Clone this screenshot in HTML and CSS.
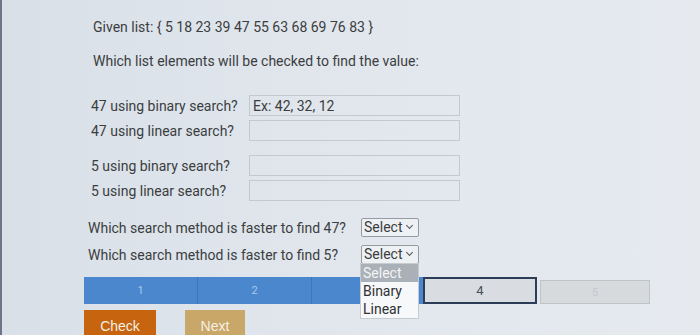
FILE: index.html
```html
<!DOCTYPE html>
<html lang="en">
<head>
    <meta charset="UTF-8">
    <title>Binary and Linear Search</title>
    <link rel="stylesheet" href="styles.css">
</head>
<body>

    <div class="activity">
        <p class="given">Given list: { 5 18 23 39 47 55 63 68 69 76 83 }</p>
        <p class="prompt">Which list elements will be checked to find the value:</p>

        <!-- 47 -->
        <div class="answer-group">
            <label class="row-label" for="bin47">47 using binary search?</label>
            <input id="bin47" class="answer" type="text" placeholder="Ex: 42, 32, 12">
            <label class="row-label" for="lin47">47 using linear search?</label>
            <input id="lin47" class="answer" type="text">
        </div>

        <!-- 5 -->
        <div class="answer-group group-two">
            <label class="row-label" for="bin5">5 using binary search?</label>
            <input id="bin5" class="answer" type="text">
            <label class="row-label" for="lin5">5 using linear search?</label>
            <input id="lin5" class="answer" type="text">
        </div>

        <!-- Faster method -->
        <div class="method-group">
            <label class="method-label" for="fast47">Which search method is faster to find 47?</label>
            <div class="select-box" id="fast47">Select <span class="caret"></span></div>
            <label class="method-label" for="fast5">Which search method is faster to find 5?</label>
            <div class="select-wrap">
                <div class="select-box" id="fast5">Select <span class="caret"></span></div>
                <ul class="options">
                    <li class="active">Select</li>
                    <li>Binary</li>
                    <li>Linear</li>
                </ul>
            </div>
        </div>

        <!-- Progress (level 3 is hidden behind the open dropdown) -->
        <div class="levels">
            <div class="level done">1</div>
            <div class="level done">2</div>
            <div class="level done"></div>
            <div class="level current">4</div>
            <div class="level todo">5</div>
        </div>

        <div class="buttons">
            <button class="check-btn">Check</button>
            <button class="next-btn">Next</button>
        </div>
    </div>

</body>
</html>
```

FILE: styles.css
```css
body {
    margin: 0;
    height: 335px;
    overflow: hidden;
    font-family: Roboto, "Noto Sans", sans-serif;
    color: #3b3d40;
    background: linear-gradient(to right, #d9e0e8, #e3e8ee 60%, #e6eaef);
    border-left: 2px solid #6c7686;
}
.activity {
    padding: 19px 0 0 82px;
}
p {
    margin: 0;
    font-size: 14px;
}
.given {
    padding-left: 9px;
}
.prompt {
    margin-top: 18px;
    padding-left: 9px;
}

/* Text answer rows */
.answer-group {
    display: grid;
    grid-template-columns: 158px 211px;
    row-gap: 4px;
    align-items: center;
    margin-top: 26px;
    padding-left: 7px;
}
.group-two {
    margin-top: 14px;
}
.row-label {
    font-size: 14px;
}
.answer {
    height: 21px;
    box-sizing: border-box;
    border: 1px solid #c3c9cf;
    background: transparent;
    font-family: inherit;
    font-size: 14px;
    padding: 0 3px;
    margin: 0;
}
.answer::placeholder {
    color: #3b3d40;
}

/* Faster method rows */
.method-group {
    display: grid;
    grid-template-columns: 273px 58px;
    row-gap: 8px;
    align-items: center;
    margin-top: 17px;
    padding-left: 4px;
}
.method-label {
    font-size: 14px;
}
.select-box {
    height: 19px;
    box-sizing: border-box;
    border: 1px solid #949ba3;
    border-radius: 2px;
    background: #eef1f4;
    font-size: 14px;
    line-height: 17px;
    padding-left: 2px;
}
.caret {
    display: inline-block;
    width: 4px;
    height: 4px;
    border-right: 1.5px solid #555;
    border-bottom: 1.5px solid #555;
    transform: rotate(45deg);
    margin-left: 1px;
    vertical-align: 4px;
}
.select-wrap {
    position: relative;
}
.options {
    position: absolute;
    top: 18px;
    left: -1px;
    width: 57px;
    margin: 0;
    padding: 0;
    list-style: none;
    background: #f7f8f9;
    border: 1px solid #c6cbd0;
    z-index: 2;
}
.options li {
    font-size: 14px;
    height: 18px;
    line-height: 18px;
    padding-left: 2px;
    color: #2f3135;
}
.options .active {
    background: #a9b0b7;
    color: #f3f4f5;
}

/* Level bar */
.levels {
    display: grid;
    grid-template-columns: repeat(5, 114px);
    margin-top: 13px;
    height: 27px;
}
.level {
    display: flex;
    align-items: center;
    justify-content: center;
    font-size: 11px;
}
.done {
    background: #4a87cc;
    color: #a9c8ea;
    border-right: 1px solid #3f77b6;
}
.current {
    background: #d9dde1;
    border: 2px solid #2d3d58;
    color: #4a4e54;
    font-size: 13px;
    margin: 0 3px 0 -3px;
}
.todo {
    background: #d6dadd;
    border: 1px solid #bfc4c9;
    color: #c4c8cc;
    margin: 3px 4px 0 0;
}

/* Buttons */
.buttons {
    display: flex;
    gap: 29px;
    margin-top: 6px;
}
button {
    border: none;
    border-radius: 0;
    color: #f4efe6;
    font-family: "Liberation Sans", Arial, sans-serif;
    font-size: 14px;
    height: 28px;
    padding-top: 4px;
}
.check-btn {
    width: 72px;
    background: #c6640f;
}
.next-btn {
    width: 60px;
    background: #c9a768;
}
```
